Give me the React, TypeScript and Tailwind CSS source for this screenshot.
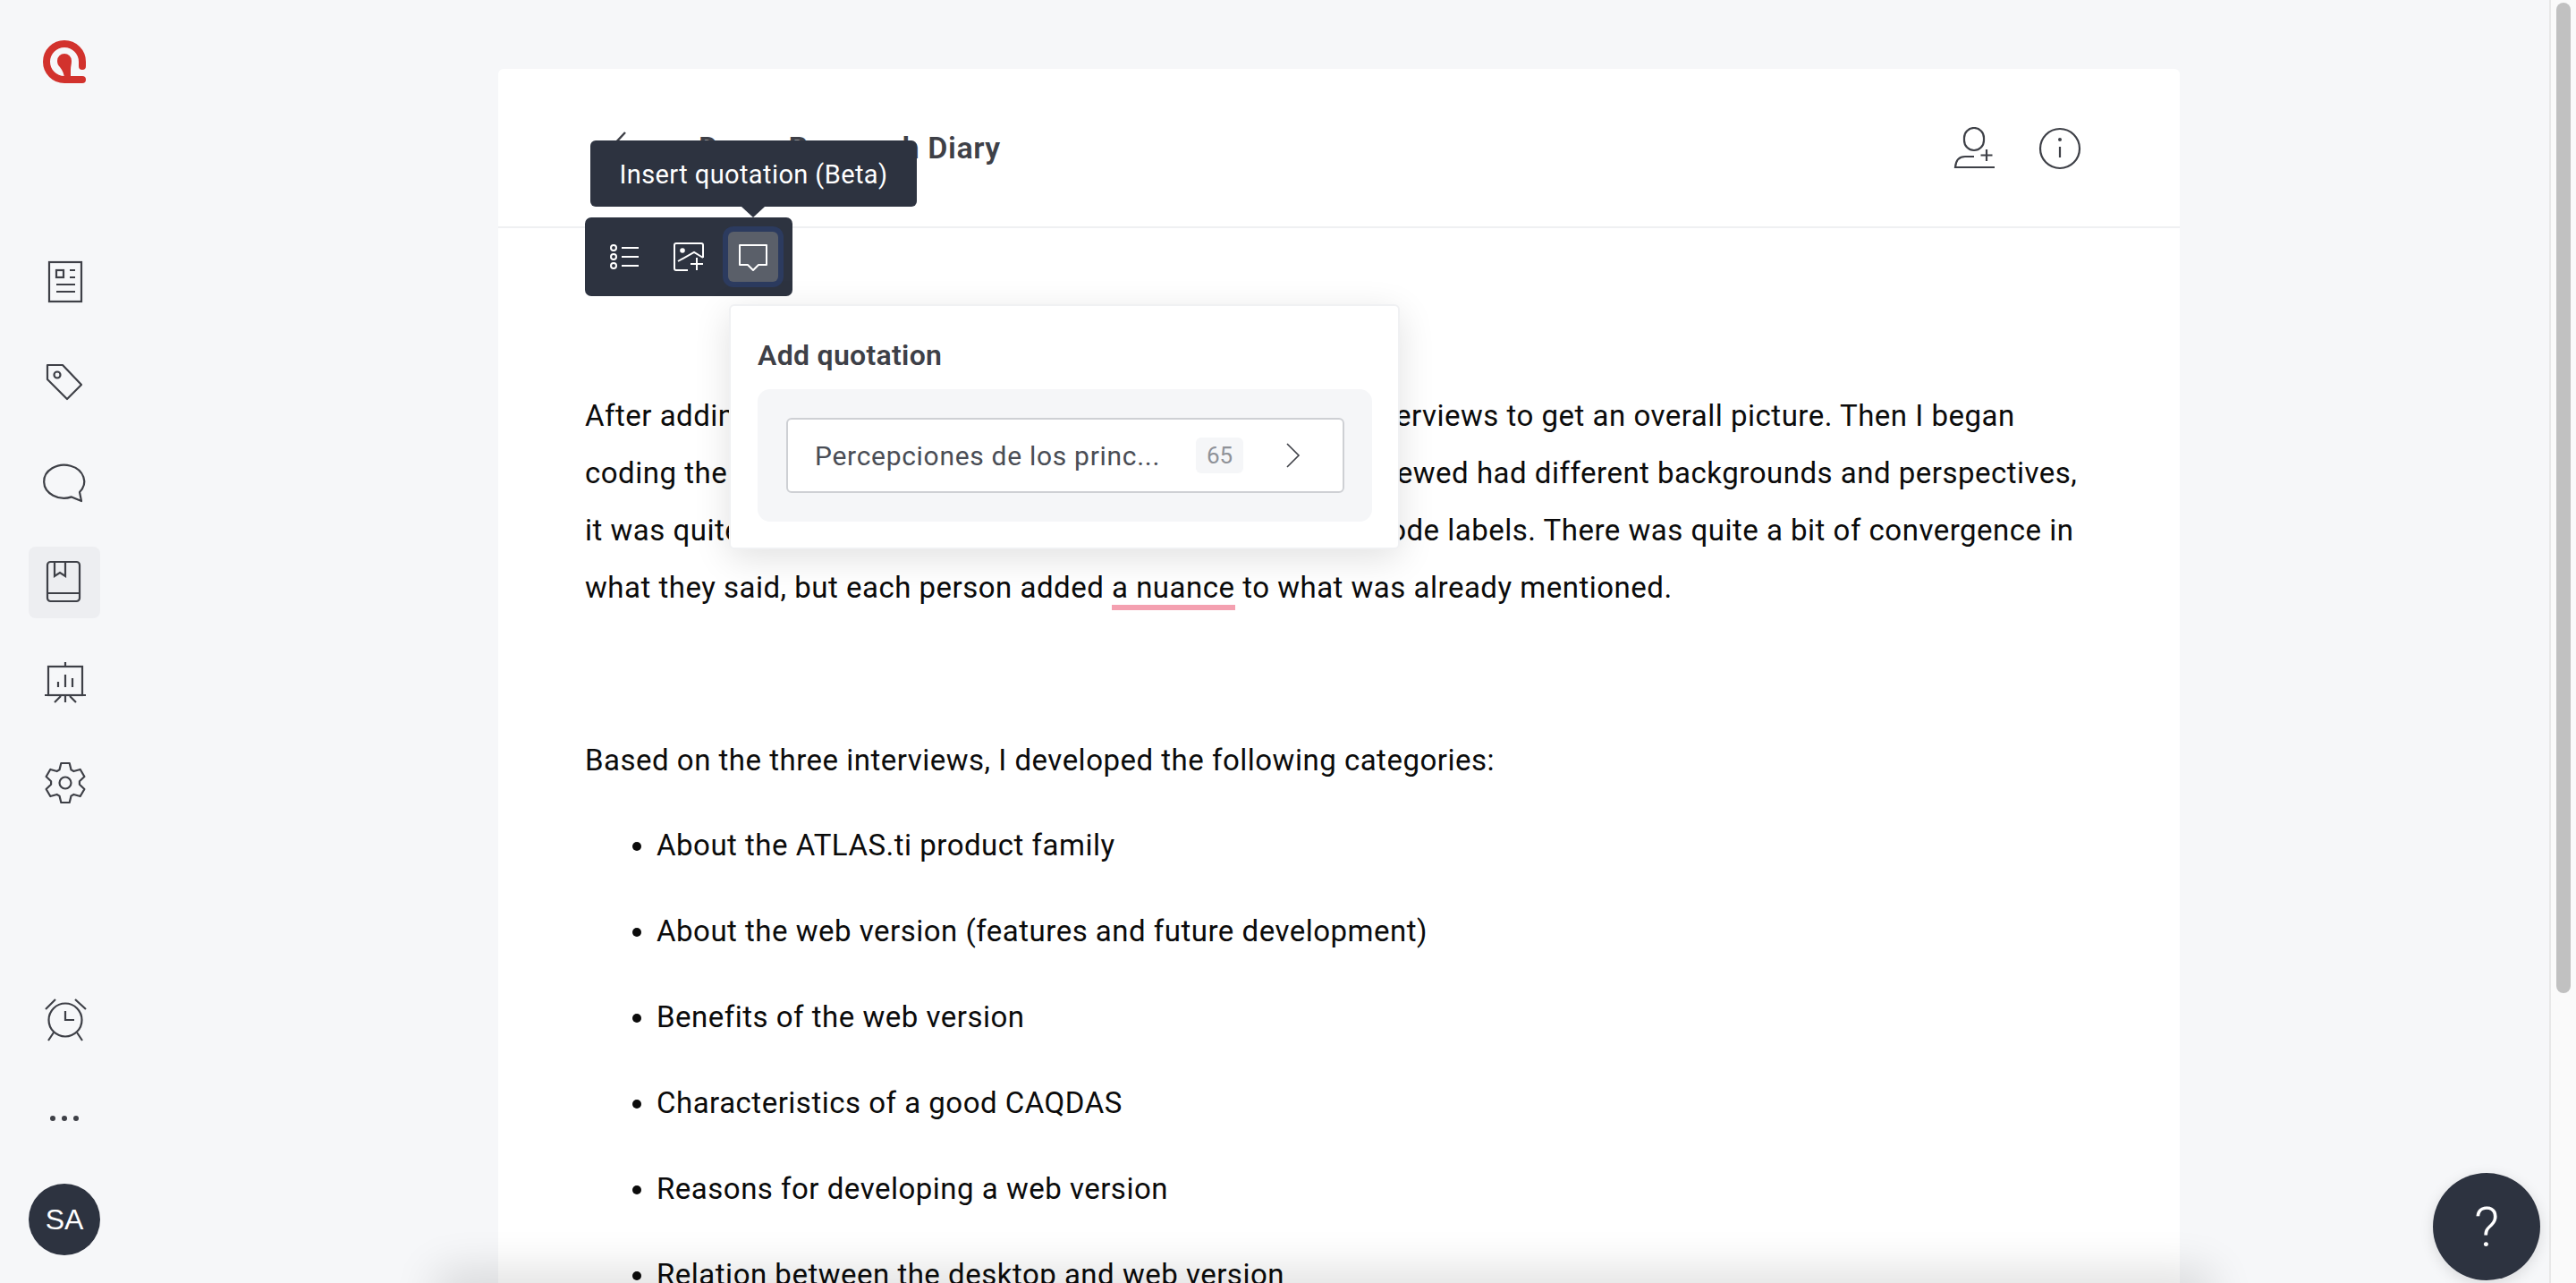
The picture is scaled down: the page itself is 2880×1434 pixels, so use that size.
import React from 'react';

const categories = [
    'About the ATLAS.ti product family',
    'About the web version (features and future development)',
    'Benefits of the web version',
    'Characteristics of a good CAQDAS',
    'Reasons for developing a web version',
    'Relation between the desktop and web version',
];

const gearPoints = () => {
    const pts: string[] = [];
    const at = (r: number, deg: number) => {
        const a = (deg * Math.PI) / 180;
        return `${(25 + r * Math.cos(a)).toFixed(2)},${(24 + r * Math.sin(a)).toFixed(2)}`;
    };
    for (let k = 0; k < 6; k++) {
        const c = -90 + 60 * k;
        pts.push(at(16, c - 24), at(22.5, c - 12), at(22.5, c + 12), at(16, c + 24));
    }
    return pts.join(' ');
};

const NavIcon: React.FC<{ children: React.ReactNode }> = ({ children }) => (
    <svg width="48" height="48" viewBox="0 0 48 48" fill="none" stroke="#3e4047" strokeWidth="2.2" className="overflow-visible">
        {children}
    </svg>
);

const Sidebar: React.FC = () => (
    <aside className="w-[144px] h-full shrink-0 flex flex-col items-center">
        <div className="mt-[45px] w-[48px] h-[48px]">
            <svg width="48" height="48" viewBox="0 0 48 48" fill="none">
                <path d="M44 29V24A20 20 0 1 0 24 44H44" stroke="#d2322d" strokeWidth="8" strokeLinecap="round" />
                <path d="M16 23A8 8 0 0 1 32 23C32 27 31 29 31 33V44H24C24 38 22 34 19 30C17 28 16 26 16 23Z" fill="#d2322d" />
            </svg>
        </div>
        <nav className="mt-[182px] flex flex-col items-center gap-[32px] w-[80px]">
            <div className="w-[80px] h-[80px] flex items-center justify-center">
                <NavIcon>
                    <rect x="7" y="2" width="36" height="44" />
                    <rect x="15" y="11" width="8" height="8" />
                    <path d="M30 11h6M30 19h6M15 27h21M15 35h21" />
                </NavIcon>
            </div>
            <div className="w-[80px] h-[80px] flex items-center justify-center">
                <NavIcon>
                    <path d="M5 5H22L43 27L27 43L5 21Z" strokeLinejoin="round" />
                    <circle cx="16" cy="16" r="3.5" />
                </NavIcon>
            </div>
            <div className="w-[80px] h-[80px] flex items-center justify-center">
                <NavIcon>
                    <path d="M32 40.4L43 45L41 35A22.5 18.5 0 1 0 32 40.4Z" strokeLinejoin="round" />
                </NavIcon>
            </div>
            <div className="w-[80px] h-[80px] rounded-[8px] bg-[#edeef1] flex items-center justify-center">
                <NavIcon>
                    <rect x="5" y="1" width="36" height="44" rx="3.5" />
                    <path d="M5 36H41M13 1V17L19 13L25 17V1" />
                </NavIcon>
            </div>
            <div className="w-[80px] h-[80px] flex items-center justify-center">
                <NavIcon>
                    <rect x="6" y="6" width="38" height="32" />
                    <path d="M25 1V6M2 38H48M25 38V46M13 46L20 39M37 46L30 39M17 23V29M25 15V29M33 19V29" />
                </NavIcon>
            </div>
            <div className="w-[80px] h-[80px] flex items-center justify-center">
                <NavIcon>
                    <polygon points={gearPoints()} strokeLinejoin="round" />
                    <circle cx="25" cy="24" r="6.5" />
                </NavIcon>
            </div>
        </nav>
        <div className="mt-auto mb-[31px] flex flex-col items-center">
            <NavIcon>
                <circle cx="25" cy="24" r="18.5" />
                <path d="M25 14V24H35M3 12L14 1M36 1L48 12M6 47L12 38M44 47L38 38" />
            </NavIcon>
            <div className="mt-[83px] flex gap-[7px]">
                <span className="w-[6px] h-[6px] rounded-full bg-[#3e4047]" />
                <span className="w-[6px] h-[6px] rounded-full bg-[#3e4047]" />
                <span className="w-[6px] h-[6px] rounded-full bg-[#3e4047]" />
            </div>
            <div className="mt-[70px] w-[80px] h-[80px] rounded-full bg-[#2d3340] text-white text-[32px] flex items-center justify-center font-['Liberation_Sans',sans-serif]">
                SA
            </div>
        </div>
    </aside>
);

const QuoteToolbar: React.FC = () => (
    <>
        {/* tooltip */}
        <div className="absolute left-[103px] top-[80px] w-[365px] h-[74px] pt-[3px] rounded-[6px] bg-[#2d3340] text-white text-[29px] tracking-[0.4px] flex items-center justify-center">
            Insert quotation (Beta)
        </div>
        <div className="absolute left-[272px] top-[154px] w-0 h-0 border-l-[13px] border-r-[13px] border-t-[12px] border-l-transparent border-r-transparent border-t-[#2d3340]" />

        {/* format bar */}
        <div className="absolute left-[97px] top-[166px] rounded-[7px] bg-[#2d3340] p-[16px] flex gap-[16px]">
            <button className="w-[56px] h-[56px] flex items-center justify-center">
                <svg width="40" height="40" viewBox="0 0 40 40" fill="none" stroke="white" strokeWidth="2">
                    <circle cx="8" cy="10" r="3" />
                    <circle cx="8" cy="20" r="3" />
                    <circle cx="8" cy="30" r="3" />
                    <path d="M17 10H36M17 20H36M17 30H36" />
                </svg>
            </button>
            <button className="w-[56px] h-[56px] flex items-center justify-center">
                <svg width="40" height="40" viewBox="0 0 40 40" fill="none" stroke="white" strokeWidth="2">
                    <path d="M19 35H6Q4 35 4 33V7Q4 5 6 5H34Q36 5 36 7V21" />
                    <circle cx="13" cy="13" r="2.8" fill="white" stroke="none" />
                    <path d="M8 25L26 15L36 21M29 21V35M22 28H36" />
                </svg>
            </button>
            <button className="w-[56px] h-[56px] rounded-[6px] bg-[#5a5f69] ring-[6px] ring-[#2c3b5f] flex items-center justify-center">
                <svg width="40" height="40" viewBox="0 0 40 40" fill="none" stroke="white" strokeWidth="2">
                    <path d="M5 7H35V29H26L20 35L14 29H5Z" strokeLinejoin="round" />
                </svg>
            </button>
        </div>

        {/* quotation popover */}
        <div className="absolute left-[258px] top-[263px] w-[750px] h-[274px] rounded-[6px] bg-white border-2 border-[#f0f1f3] shadow-[0_10px_40px_rgba(0,0,0,0.12)] px-[30px]">
            <h4 className="mt-[31px] h-[48px] leading-[48px] text-[32px] tracking-[0.3px] font-semibold text-[#3e4047]">Add quotation</h4>
            <div className="mt-[14px] w-[687px] h-[148px] rounded-[14px] bg-[#f5f6f8] pt-[32px] px-[32px]">
                <div className="w-[624px] h-[84px] rounded-[6px] bg-white border-2 border-[#ced0d4] flex items-center pl-[30px]">
                    <span className="w-[396px] text-[30px] tracking-[0.7px] text-[#4a4d55] whitespace-nowrap">Percepciones de los princ...</span>
                    <span className="ml-[30px] w-[53px] h-[40px] rounded-[6px] bg-[#f5f6f8] text-[26px] text-[#8f9298] flex items-center justify-center">65</span>
                    <svg className="ml-[46px]" width="20" height="30" viewBox="0 0 20 30" fill="none" stroke="#3e4047" strokeWidth="1.6">
                        <path d="M3 2L16 15L3 28" />
                    </svg>
                </div>
            </div>
        </div>
    </>
);

export default function App() {
    return (
        <div className="relative w-[2880px] h-[1434px] overflow-hidden flex bg-[#f6f7f9] font-['Roboto',sans-serif]">
            <Sidebar />
            <main className="flex-1 h-full overflow-hidden flex justify-center">
                <section className="relative w-[1880px] mt-[77px] rounded-t-[6px] bg-white shrink-0 h-[1500px]">
                    <header className="h-[178px] border-b-2 border-[#eff0f2] px-[97px] flex items-center">
                        <svg width="20" height="34" viewBox="0 0 20 34" fill="none" stroke="#3e4047" strokeWidth="2.5" className="ml-[28px] -mt-[4px]">
                            <path d="M17 2L3 17L17 32" />
                        </svg>
                        <h1 className="ml-[79px] text-[34px] tracking-[0.55px] font-semibold text-[#3e4047] whitespace-nowrap">Demo Research Diary</h1>
                        <div className="ml-auto mr-[13px] mt-[2px] flex items-center gap-[48px]">
                            <svg width="48" height="48" viewBox="0 0 48 48" fill="none" stroke="#3e4047" strokeWidth="2.2">
                                <rect x="13" y="1" width="22" height="25" rx="11" />
                                <path d="M24 33H14Q4 33 3 45H47M38 25V38M31.5 31.5H44.5" />
                            </svg>
                            <svg width="48" height="48" viewBox="0 0 48 48" fill="none" stroke="#3e4047" strokeWidth="2.2">
                                <circle cx="24" cy="24" r="22" />
                                <circle cx="24" cy="14" r="2" fill="#3e4047" stroke="none" />
                                <path d="M24 22V34" />
                            </svg>
                        </div>
                    </header>
                    <article className="px-[97px] pt-[178px] text-[33px] tracking-[0.5px] leading-[64px] text-[#0b0b0b] whitespace-nowrap">
                        <p>
                            After adding all of the documents, I first read through the interviews to get an overall picture. Then I began
                            <br />
                            coding the first interviews. As the three persons I had interviewed had different backgrounds and perspectives,
                            <br />
                            it was quite easy for one to come up with a lot of different code labels. There was quite a bit of convergence in
                            <br />
                            what they said, but each person added <span className="border-b-[6px] border-[#f4a0b0]">a nuance</span> to what was already mentioned.
                        </p>
                        <p className="mt-[129px]">Based on the three interviews, I developed the following categories:</p>
                        <ul className="mt-[31px] pl-[80px] list-disc flex flex-col gap-[32px]">
                            {categories.map((c) => (
                                <li key={c}>{c}</li>
                            ))}
                        </ul>
                    </article>
                    <QuoteToolbar />
                </section>
            </main>
            <div className="w-[30px] h-full shrink-0 bg-[#fafafa] border-l-2 border-[#e8e8e8] pl-[6px] pt-[3px]">
                <div className="w-[16px] h-[1107px] rounded-full bg-[#c1c1c1]" />
            </div>

            {/* shadow from the bar just below the fold */}
            <div className="absolute left-[500px] bottom-[-24px] w-[1960px] h-[24px] shadow-[0_0_50px_12px_rgba(0,0,0,0.14)]" />

            <button className="absolute left-[2720px] top-[1311px] w-[120px] h-[120px] rounded-full bg-[#2d3340] shadow-[0_4px_16px_rgba(0,0,0,0.12)] text-white text-[62px] font-light flex items-center justify-center">
                ?
            </button>
        </div>
    );
}
